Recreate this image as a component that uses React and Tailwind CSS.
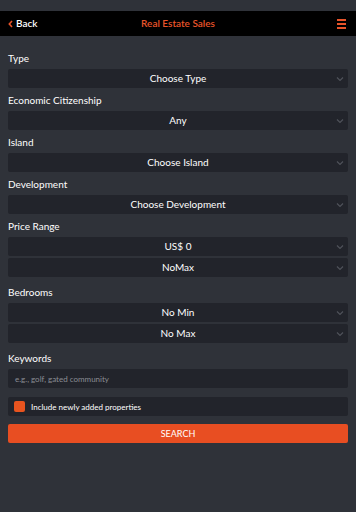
import React from "react";

function Chevron() {
  return (
    <svg width="8" height="5" viewBox="0 0 8 5" className="absolute right-[4px] top-1/2 -translate-y-1/2">
      <path d="M1 1l3 3 3-3" fill="none" stroke="#4f525a" strokeWidth="1.2" />
    </svg>
  );
}

function Select({ value }) {
  return (
    <div className="relative h-[19px] bg-[#22242b] rounded-[2px] flex items-center justify-center text-[10px] text-white">
      {value}
      <Chevron />
    </div>
  );
}

function Field({ label, values }) {
  return (
    <div className={values.length > 1 ? "flex flex-col mb-[3px]" : "flex flex-col"}>
      <div className="h-[12px] leading-[12px] text-[10px] text-white mb-[5px]">{label}</div>
      <div className="flex flex-col gap-[2px]">
        {values.map((v) => (
          <Select key={v} value={v} />
        ))}
      </div>
    </div>
  );
}

export default function App() {
  return (
    <div className="min-h-screen bg-[#2f3239] pt-[11px] font-['Lato',sans-serif]">
      {/* Top bar */}
      <div className="h-[25px] bg-black flex items-center justify-between px-[8px]">
        <div className="flex items-center gap-[3px] text-white text-[10px] w-[60px]">
          <svg width="5" height="8" viewBox="0 0 5 8">
            <path d="M4 1L1.3 4 4 7" fill="none" stroke="#e8542a" strokeWidth="1.6" />
          </svg>
          <span className="font-semibold">Back</span>
        </div>
        <div className="text-[#e8542a] text-[10px] font-semibold">Real Estate Sales</div>
        <div className="w-[60px] flex justify-end pr-[2px]">
          <div className="flex flex-col gap-[2px]">
            <div className="w-[9px] h-[2px] bg-[#e8542a]" />
            <div className="w-[9px] h-[2px] bg-[#e8542a]" />
            <div className="w-[9px] h-[2px] bg-[#e8542a]" />
          </div>
        </div>
      </div>

      <div className="px-[8px] pt-[16px] flex flex-col gap-[6px]">
        <Field label="Type" values={["Choose Type"]} />
        <Field label="Economic Citizenship" values={["Any"]} />
        <Field label="Island" values={["Choose Island"]} />
        <Field label="Development" values={["Choose Development"]} />
        <Field label="Price Range" values={["US$ 0", "NoMax"]} />
        <Field label="Bedrooms" values={["No Min", "No Max"]} />
        <div className="flex flex-col">
          <div className="h-[12px] leading-[12px] text-[10px] text-white mb-[5px]">Keywords</div>
          <div className="h-[19px] bg-[#22242b] rounded-[2px] flex items-center px-[7px] text-[8px] text-[#8a8d94]">
            e.g., golf, gated community
          </div>
        </div>
        <div className="mt-[3px] h-[19px] bg-[#22242b] rounded-[2px] flex items-center px-[6px] gap-[6px]">
          <div className="w-[11px] h-[11px] rounded-[2px] bg-[#e8541f]" />
          <span className="text-[8px] text-white">Include newly added properties</span>
        </div>
        <div className="mt-[2px] h-[19px] bg-[#e84e22] rounded-[2px] flex items-center justify-center text-[9px] text-white">
          SEARCH
        </div>
      </div>
    </div>
  );
}
